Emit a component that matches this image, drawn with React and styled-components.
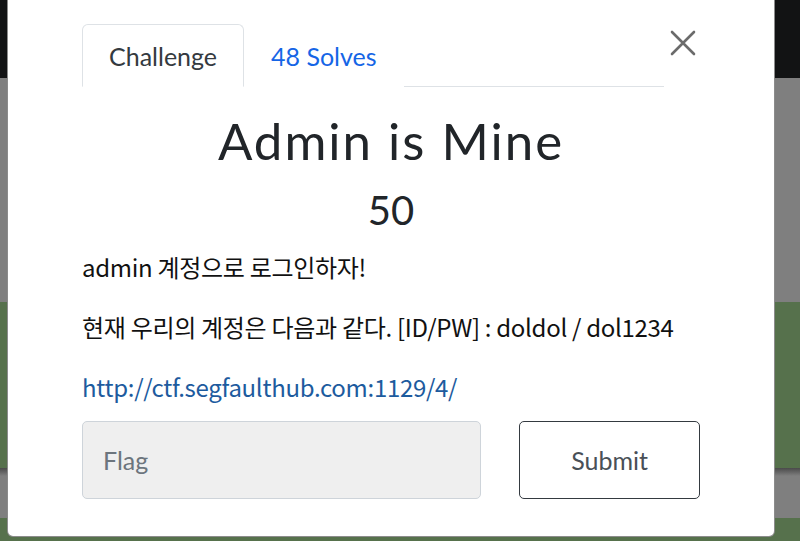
import styled, { createGlobalStyle } from "styled-components";

const GlobalStyle = createGlobalStyle`
  html, body {
    margin: 0;
    padding: 0;
    height: 541px;
    overflow: hidden;
  }
  body {
    font-family: Lato, "Noto Sans CJK KR", "Noto Sans", sans-serif;
  }
`;

const bands = [
  { height: 78, color: "#121314" },
  { height: 224, color: "#7f7f7f" },
  { height: 166, color: "#56714c" },
  { height: 50, color: "#7f7f7f", shadow: true },
  { height: 23, color: "#56714c" },
];

const App = () => (
  <>
    <GlobalStyle />
    <Page>
      {bands.map((b, i) => (
        <Band key={i} $height={b.height} $color={b.color} $shadow={b.shadow} />
      ))}
      <Modal>
        <Header>
          <Tabs>
            <Tab $active>Challenge</Tab>
            <Tab>48 Solves</Tab>
          </Tabs>
          <CloseButton aria-label="close">
            <svg width="26" height="26" viewBox="0 0 26 26">
              <path
                d="M2 2 L24 24 M24 2 L2 24"
                stroke="#6b6b6b"
                strokeWidth="2.6"
                strokeLinecap="round"
              />
            </svg>
          </CloseButton>
        </Header>
        <Title>Admin is Mine</Title>
        <Value>50</Value>
        <Description>
          <p>admin 계정으로 로그인하자!</p>
          <p>현재 우리의 계정은 다음과 같다. [ID/PW] : doldol / dol1234</p>
          <p>
            <a href="#">http://ctf.segfaulthub.com:1129/4/</a>
          </p>
        </Description>
        <SubmitRow>
          <FlagInput placeholder="Flag" />
          <SubmitButton>Submit</SubmitButton>
        </SubmitRow>
      </Modal>
    </Page>
  </>
);

export default App;

const Page = styled.div`
  position: relative;
  width: 800px;
  height: 541px;
  overflow: hidden;
  display: flex;
  flex-direction: column;
`;

const Band = styled.div`
  flex: 0 0 ${({ $height }) => $height}px;
  background: ${({ $shadow, $color }) =>
    $shadow
      ? `linear-gradient(to bottom, #4a4a4a 0px, ${$color} 8px)`
      : $color};
`;

const Modal = styled.div`
  position: absolute;
  left: 7px;
  top: -8px;
  width: 768px;
  height: 545px;
  box-sizing: border-box;
  background: #fff;
  border: 1px solid rgba(0, 0, 0, 0.45);
  border-radius: 6px;
  padding: 31px 74px 0 74px;
  display: flex;
  flex-direction: column;
`;

const Header = styled.div`
  display: flex;
  align-items: flex-start;
  gap: 6px;
`;

const Tabs = styled.div`
  width: 582px;
  display: flex;
  border-bottom: 1px solid #dee2e6;
`;

const Tab = styled.div`
  height: 63px;
  box-sizing: border-box;
  padding: 0 26px;
  display: flex;
  align-items: center;
  font-size: 25px;
  margin-bottom: -1px;
  color: ${({ $active }) => ($active ? "#343a40" : "#1565e6")};
  background: #fff;
  border: 1px solid ${({ $active }) => ($active ? "#dee2e6" : "transparent")};
  border-bottom-color: ${({ $active }) => ($active ? "#fff" : "transparent")};
  border-radius: 6px 6px 0 0;
`;

const CloseButton = styled.button`
  margin-top: 6px;
  width: 26px;
  height: 26px;
  padding: 0;
  border: none;
  background: none;
  display: flex;
`;

const Title = styled.h1`
  margin: 23px 0 0;
  text-align: center;
  font-size: 51px;
  line-height: 1.2;
  font-weight: 400;
  letter-spacing: 2px;
  color: #212529;
`;

const Value = styled.h2`
  margin: 15px 0 0;
  text-align: center;
  font-size: 40px;
  line-height: 1.2;
  font-weight: 400;
  color: #212529;
`;

const Description = styled.div`
  margin-top: 18px;
  font-family: "Noto Sans CJK KR", sans-serif;
  font-size: 24px;
  line-height: 30px;
  letter-spacing: -0.3px;
  color: #111;
  p {
    margin: 0 0 30px;
  }
  p:last-child {
    margin: 0;
  }
  a {
    color: #1d5b9e;
    text-decoration: none;
  }
`;

const SubmitRow = styled.div`
  margin-top: 19px;
  display: flex;
  gap: 38px;
`;

const FlagInput = styled.input`
  width: 400px;
  height: 78px;
  box-sizing: border-box;
  padding: 0 20px;
  background: #efefef;
  border: 1px solid #ced4da;
  border-radius: 5px;
  font-family: Lato, sans-serif;
  font-size: 25px;
  color: #495057;
  &::placeholder {
    color: #6c757d;
  }
`;

const SubmitButton = styled.button`
  width: 181px;
  height: 78px;
  box-sizing: border-box;
  background: #fff;
  border: 1px solid #343a40;
  border-radius: 5px;
  font-family: Lato, sans-serif;
  font-size: 25px;
  color: #495057;
`;
